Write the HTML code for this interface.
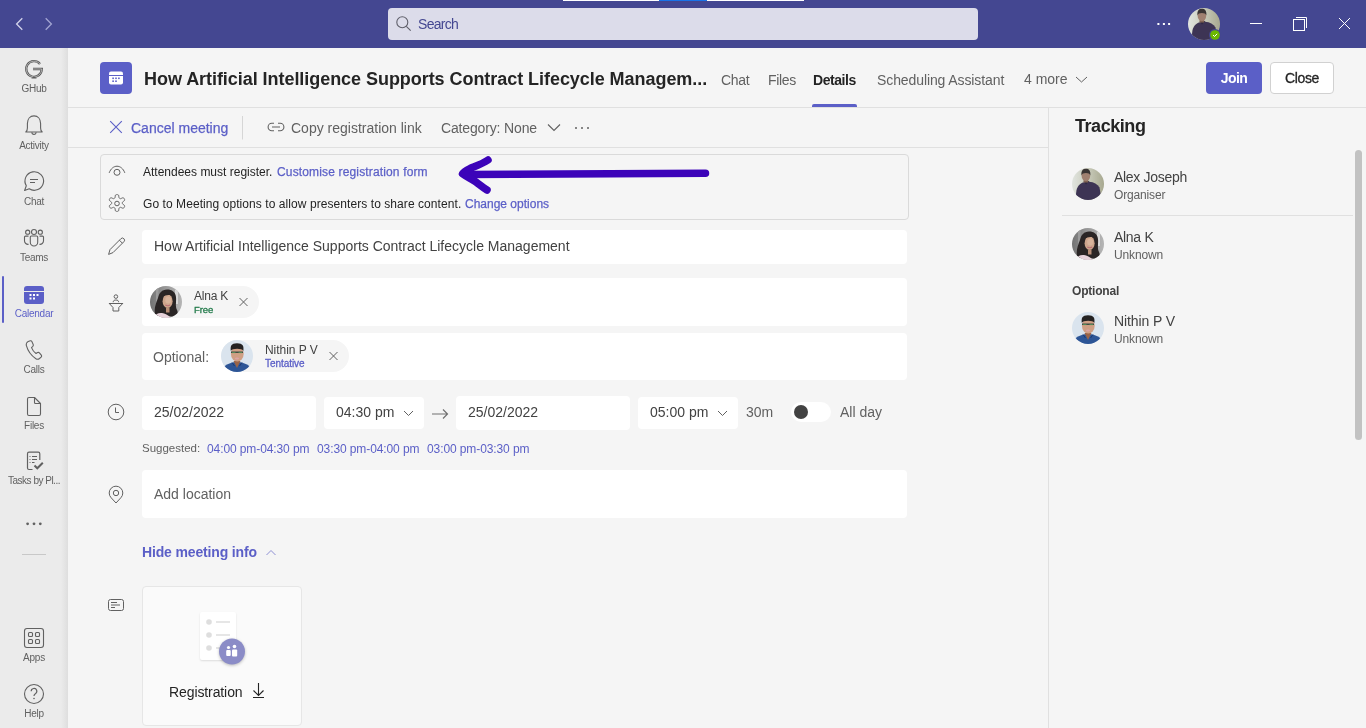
<!DOCTYPE html>
<html><head><meta charset="utf-8">
<style>
*{box-sizing:border-box;margin:0;padding:0}
html,body{-webkit-font-smoothing:antialiased;width:1366px;height:728px;overflow:hidden;background:#f5f5f5;font-family:"Liberation Sans",sans-serif;color:#242424}
.a{position:absolute}
.av{filter:blur(0.45px)}
.t{position:absolute;white-space:nowrap;line-height:1;will-change:transform}
svg{position:absolute;overflow:visible}
#tb{left:0;top:0;width:1366px;height:48px;background:#444791}
#rail{left:0;top:48px;width:68px;height:680px;background:linear-gradient(to right,#ebebeb 0,#ebebeb 61px,#dedede 68px)}
.rl{position:absolute;left:0;width:68px;text-align:center;font-size:10px;color:#616161;line-height:1;will-change:transform;letter-spacing:-0.25px}
</style></head><body>
<svg width="0" height="0" style="position:absolute">
<defs>
 <clipPath id="cc"><circle cx="16" cy="16" r="16"/></clipPath>
 <linearGradient id="gAlex" x1="0" x2="1" y1="0" y2="0"><stop offset="0" stop-color="#e4e8e4"/><stop offset="0.5" stop-color="#c9cbbb"/><stop offset="1" stop-color="#a3a48a"/></linearGradient>
 <linearGradient id="gAlna" x1="0" x2="1" y1="0" y2="0"><stop offset="0" stop-color="#6e6e6e"/><stop offset="0.5" stop-color="#9a9a9a"/><stop offset="1" stop-color="#b8b8b8"/></linearGradient>
 <filter id="bl" x="-10%" y="-10%" width="120%" height="120%"><feGaussianBlur stdDeviation="0.7"/></filter>
 <g id="avAlex" clip-path="url(#cc)"><g>
  <rect x="-2" y="-2" width="36" height="36" fill="url(#gAlex)"/>
  <path d="M3 34 L4.5 22 C6 17 9 14.8 12 14.2 L17 13.8 C22 14.2 25.5 16 27.5 19.5 L30 34 Z" fill="#3d3454"/>
  <path d="M11.5 13 L14 16.5 L17.5 13 Z" fill="#2e2840"/>
  <rect x="11.6" y="10.5" width="4.6" height="4" fill="#806252"/>
  <ellipse cx="13.9" cy="7.8" rx="4.3" ry="5.3" fill="#a08070"/>
  <path d="M9.4 7.5 C9 2.5 11 0.8 13.9 0.8 C16.8 0.8 18.8 2.5 18.4 7.5 C17.8 4.2 10 4.2 9.4 7.5 Z" fill="#3a3433"/>
 </g></g>
 <g id="avAlna" clip-path="url(#cc)"><g>
  <rect x="-2" y="-2" width="36" height="36" fill="url(#gAlna)"/>
  <rect x="6" y="0" width="2.5" height="22" fill="#9c9c9c"/>
  <rect x="25" y="4" width="3" height="14" fill="#d8d8d8"/>
  <path d="M5 28 C4 22 6 17 8 12 C9 7 12 3.5 17 3.5 C22 3.5 25.5 6 26 11 C26.5 16 25 20 27 24 C28.5 27 27.5 30 25 31 L18 30 L8 30 C6.5 30 5.5 29 5 28 Z" fill="#2a2525"/>
  <path d="M2 34 C4 28.5 8 26.5 12 27 C15 27.5 17 28.5 19.5 30.5 L21 34 Z" fill="#e8d3db"/>
  <ellipse cx="17.6" cy="15.2" rx="5" ry="6.9" fill="#cda58c"/>
  <ellipse cx="18.2" cy="14" rx="3" ry="3.5" fill="#d8b49c"/>
  <path d="M12.6 11 C14 6.8 19.5 6.5 22.6 10 C20 8.3 15 8.6 12.6 11 Z" fill="#2a2525"/>
  <path d="M16 21.5 L19.5 21.5 L19.5 26.5 L16 26.5 Z" fill="#b88e76"/>
  <path d="M15.3 19 Q17.8 20.4 20.2 19" stroke="#b86e76" stroke-width="1.1" fill="none"/>
 </g></g>
 <g id="avNith" clip-path="url(#cc)"><g>
  <rect x="-2" y="-2" width="36" height="36" fill="#dae4ee"/>
  <path d="M1 34 L3 26.5 C7 23.5 11 22 16 22 C21 22 25 23.5 29 26.5 L31 34 Z" fill="#2d5596"/>
  <path d="M12.5 21 L16 28 L19.5 21 Z" fill="#9a6448"/>
  <path d="M11 22.5 L13.5 26 M21 22.5 L18.5 26" stroke="#1e3a70" stroke-width="1"/>
  <ellipse cx="16.3" cy="13.8" rx="6.4" ry="7.6" fill="#cf9f84"/>
  <path d="M9.8 11 C9.3 6 10 3.5 16 3.3 C22 3.5 23 6 22.4 11 C21.5 8 10.7 8 9.8 11 Z" fill="#242222"/>
  <path d="M10 12.3 H22" stroke="#3f4c44" stroke-width="1.5"/>
  <path d="M11 12.6 H14.5 M17.5 12.6 H21" stroke="#5aa060" stroke-width="0.8"/>
  <ellipse cx="16" cy="18.5" rx="2.2" ry="1" fill="#dca4a4"/>
 </g></g>
</defs></svg>
<!-- title bar -->
<div id="tb" class="a"></div>
<div class="a" style="left:563px;top:0;width:241px;height:1px;background:#fff"></div>
<div class="a" style="left:659px;top:0;width:48px;height:1px;background:#1a73e8"></div>
<svg style="left:0;top:0" width="1366" height="48">
 <path d="M22.3 18.3 L16.6 24 L22.3 29.7" fill="none" stroke="#d2d3ea" stroke-width="1.3"/>
 <path d="M45.7 18.3 L51.4 24 L45.7 29.7" fill="none" stroke="#a3a5d2" stroke-width="1.3"/>
</svg>
<div class="a" style="left:388px;top:8px;width:590px;height:32px;background:#dcdcea;border-radius:4px"></div>
<svg style="left:388px;top:8px" width="40" height="32">
 <circle cx="14.3" cy="14.3" r="5.5" fill="none" stroke="#5f5f6a" stroke-width="1.1"/>
 <path d="M18.3 18.3 L22.7 22.7" stroke="#5f5f6a" stroke-width="1.1"/>
</svg>
<div class="t" style="left:418px;top:17px;font-size:14px;color:#444791;letter-spacing:-0.7px">Search</div>
<svg style="left:1150px;top:0" width="216" height="48">
 <rect x="7.4" y="23" width="2" height="2" fill="#fff"/><rect x="12.9" y="23" width="2" height="2" fill="#fff"/><rect x="18.1" y="23" width="2" height="2" fill="#fff"/>
 <path d="M100 23.5 H112" stroke="#fff" stroke-width="1"/>
 <rect x="143.5" y="19.5" width="11" height="11" fill="none" stroke="#fff" stroke-width="1"/>
 <path d="M146 17.5 H156.5 V28" fill="none" stroke="#fff" stroke-width="1"/>
 <path d="M189 18 L200 29 M200 18 L189 29" stroke="#fff" stroke-width="1"/>
</svg>
<!-- rail -->
<div id="rail" class="a"></div>
<svg style="left:0;top:48px" width="68" height="680" fill="none" stroke="#616161" stroke-width="1.1">
 <!-- GHub G -->
 <path d="M39.98 16 A7.8 7.8 0 1 0 41.8 21 H33" stroke-width="2.3" stroke="#5a5a5a"/>
 <path d="M39.98 16 A7.8 7.8 0 1 0 41.8 21 H33" stroke-width="0.6" stroke="#ebebeb"/>
 <path d="M31.2 30.5 L34 28.3 L36.8 30.5 Z" fill="#5a5a5a" stroke="none"/>
 <!-- bell -->
 <path d="M25.8 84 C26.8 83.2 27.4 82 27.4 80 V75.5 C27.4 71 30 67.9 34 67.9 C38 67.9 40.6 71 40.6 75.5 V80 C40.6 82 41.2 83.2 42.2 84 Z" stroke-linejoin="round"/>
 <path d="M31.9 84.3 A2.1 2.1 0 0 0 36.1 84.3"/>
 <!-- chat -->
 <path d="M24.6 142.5 L26.3 137.8 A9.3 9.3 0 1 1 29.2 140.8 Z" stroke-linejoin="round"/>
 <path d="M30 131.5 H38 M30 134.5 H35" stroke-width="1.2"/>
 <!-- teams -->
 <circle cx="27.7" cy="184.2" r="2.1"/><circle cx="34" cy="184" r="2.5"/><circle cx="40.3" cy="184.2" r="2.1"/>
 <path d="M30.3 189 A1 1 0 0 1 31.3 188 H36.7 A1 1 0 0 1 37.7 189 V194.3 A3.7 3.7 0 0 1 30.3 194.3 Z"/>
 <path d="M28.5 188.1 H25.5 A1 1 0 0 0 24.5 189.1 V192.8 A3.5 3.5 0 0 0 28.6 196.3"/>
 <path d="M39.5 188.1 H42.5 A1 1 0 0 1 43.5 189.1 V192.8 A3.5 3.5 0 0 1 39.4 196.3"/>
 <!-- calls -->
 <path d="M28.2 293.5 L30.3 292.8 C31 292.6 31.6 293 31.9 293.6 L33.2 296.5 C33.5 297.2 33.3 297.9 32.8 298.4 L31.5 299.6 C32.3 301.6 34 304 36 305.5 L37.6 304.6 C38.2 304.3 38.9 304.4 39.4 304.9 L41.3 307.2 C41.8 307.8 41.7 308.6 41.1 309.1 L39.5 310.5 C38.5 311.3 37 311.4 35.9 310.7 C31.5 307.7 27.9 303 26.3 297.3 C26 296 26.7 294 28.2 293.5 Z" stroke-linejoin="round"/>
 <!-- files -->
 <path d="M29.5 349.5 H34.5 L40.5 355.5 V366 A1.5 1.5 0 0 1 39 367.5 H29 A1.5 1.5 0 0 1 27.5 366 V351 A1.5 1.5 0 0 1 29 349.5 Z" stroke-linejoin="round"/>
 <path d="M34.5 349.8 V354.5 A1 1 0 0 0 35.5 355.5 H40.2"/>
 <!-- tasks -->
 <path d="M39.8 412 V405.7 A1.5 1.5 0 0 0 38.3 404.2 H29 A1.5 1.5 0 0 0 27.5 405.7 V420 A1.5 1.5 0 0 0 29 421.5 H32.5" stroke-linejoin="round" stroke-width="1.2"/>
 <path d="M32 408.5 H37 M32 411.5 H37 M32 414.5 H34.5" stroke-width="1.1"/>
 <circle cx="30" cy="408.5" r="0.6" fill="#616161" stroke="none"/><circle cx="30" cy="411.5" r="0.6" fill="#616161" stroke="none"/><circle cx="30" cy="414.5" r="0.6" fill="#616161" stroke="none"/>
 <path d="M34.5 417.5 L37.3 420.3 L42.8 414.8" stroke-width="2"/>
 <!-- more -->
 <circle cx="27.6" cy="475.8" r="1.4" fill="#616161" stroke="none"/><circle cx="34" cy="475.8" r="1.4" fill="#616161" stroke="none"/><circle cx="40.3" cy="475.8" r="1.4" fill="#616161" stroke="none"/>
 <path d="M22 506.5 H46" stroke="#c8c8c8" stroke-width="1"/>
 <!-- apps -->
 <rect x="24.5" y="580.5" width="19" height="19" rx="2.5"/>
 <rect x="28.5" y="584.5" width="4" height="4" rx="1"/><rect x="35.5" y="584.5" width="4" height="4" rx="1"/>
 <rect x="28.5" y="591.5" width="4" height="4" rx="1"/><rect x="35.5" y="591.5" width="4" height="4" rx="1"/>
 <!-- help -->
 <circle cx="34" cy="646" r="9.5"/>
 <path d="M31.2 643.3 A2.8 2.8 0 1 1 35.4 645.7 C34.5 646.3 34 646.8 34 648" stroke-width="1.2"/>
 <circle cx="34" cy="650.5" r="0.8" fill="#616161" stroke="none"/>
</svg>
<!-- calendar active -->
<div class="a" style="left:2px;top:276px;width:2px;height:47px;background:#5b5fc7;border-radius:1px"></div>
<svg style="left:0;top:48px" width="68" height="680">
 <path d="M24 241 A3 3 0 0 1 27 238 H41 A3 3 0 0 1 44 241 V243 H24 Z" fill="#5b5fc7"/>
 <path d="M24 244 H44 V253 A3 3 0 0 1 41 256 H27 A3 3 0 0 1 24 253 Z" fill="#5b5fc7"/>
 <g fill="#fff"><rect x="29.5" y="246" width="2" height="2"/><rect x="33" y="246" width="2" height="2"/><rect x="36.5" y="246" width="2" height="2"/><rect x="29.5" y="249.5" width="2" height="2"/><rect x="33" y="249.5" width="2" height="2"/></g>
</svg>
<div class="rl" style="top:83.5px">GHub</div>
<div class="rl" style="top:140.5px">Activity</div>
<div class="rl" style="top:196.5px">Chat</div>
<div class="rl" style="top:252.5px">Teams</div>
<div class="rl" style="top:309px;color:#5b5fc7">Calendar</div>
<div class="rl" style="top:364.5px">Calls</div>
<div class="rl" style="top:420.5px">Files</div>
<div class="rl" style="top:476px;letter-spacing:-0.5px">Tasks by Pl...</div>
<div class="rl" style="top:652.5px">Apps</div>
<div class="rl" style="top:708.5px">Help</div>
<!-- header -->
<div class="a" style="left:68px;top:107px;width:1298px;height:1px;background:#e0e0e0"></div>
<div class="a" style="left:100px;top:62px;width:32px;height:32px;background:#5b5fc7;border-radius:4px"></div>
<svg style="left:100px;top:62px" width="32" height="32">
 <path d="M9 11.5 A2 2 0 0 1 11 9.5 H21 A2 2 0 0 1 23 11.5 V13 H9 Z" fill="#fff"/>
 <path d="M9 14 H23 V20.5 A2 2 0 0 1 21 22.5 H11 A2 2 0 0 1 9 20.5 Z" fill="#fff"/>
 <g fill="#5b5fc7"><rect x="12.3" y="15.5" width="1.6" height="1.6"/><rect x="15.2" y="15.5" width="1.6" height="1.6"/><rect x="18.1" y="15.5" width="1.6" height="1.6"/><rect x="12.3" y="18.4" width="1.6" height="1.6"/><rect x="15.2" y="18.4" width="1.6" height="1.6"/></g>
</svg>
<div class="t" style="left:144px;top:70px;font-size:18px;font-weight:bold;color:#242424;letter-spacing:-0.05px">How Artificial Intelligence Supports Contract Lifecycle Managem...</div>
<div class="t" style="left:721px;top:73px;font-size:14px;color:#616161;letter-spacing:-0.35px">Chat</div>
<div class="t" style="left:768px;top:73px;font-size:14px;color:#616161;letter-spacing:-0.3px">Files</div>
<div class="t" style="left:813px;top:73px;font-size:14px;color:#242424;font-weight:bold;letter-spacing:-0.45px">Details</div>
<div class="a" style="left:812px;top:104px;width:45px;height:3px;background:#5b5fc7;border-radius:2px 2px 0 0"></div>
<div class="t" style="left:877px;top:73px;font-size:14px;color:#616161;letter-spacing:-0.1px">Scheduling Assistant</div>
<div class="t" style="left:1024px;top:72px;font-size:14px;color:#616161">4 more</div>
<svg style="left:1074px;top:72px" width="16" height="16"><path d="M2 5 L7.5 10 L13 5" fill="none" stroke="#616161" stroke-width="1"/></svg>
<div class="a" style="left:1206px;top:62px;width:56px;height:32px;background:#5b5fc7;border-radius:4px"></div>
<div class="t" style="left:1206px;top:71px;width:56px;text-align:center;font-size:14px;font-weight:bold;color:#fff;letter-spacing:-0.6px">Join</div>
<div class="a" style="left:1270px;top:62px;width:64px;height:32px;background:#fff;border:1px solid #d1d1d1;border-radius:4px"></div>
<div class="t" style="left:1270px;top:71px;width:64px;text-align:center;font-size:14px;color:#242424;letter-spacing:-0.4px;-webkit-text-stroke:0.3px #242424">Close</div>
<!-- right divider -->
<div class="a" style="left:1048px;top:108px;width:1px;height:620px;background:#e0e0e0"></div>
<!-- toolbar -->
<div class="a" style="left:68px;top:147px;width:980px;height:1px;background:#e0e0e0"></div>
<svg style="left:100px;top:112px" width="520" height="32" fill="none">
 <path d="M10.2 9.2 L21.8 20.8 M21.8 9.2 L10.2 20.8" stroke="#5b5fc7" stroke-width="1.1"/>
 <path d="M142.5 4 V27.5" stroke="#d6d6d6" stroke-width="1"/>
 <path d="M174 11.3 H171.8 A3.7 3.7 0 0 0 171.8 18.7 H174 M178 11.3 H180.2 A3.7 3.7 0 0 1 180.2 18.7 H178 M172 15 H180" stroke="#616161" stroke-width="1.1"/>
 <path d="M448 12.5 L454 18.5 L460 12.5" stroke="#616161" stroke-width="1.1"/>
 <circle cx="476" cy="16" r="1" fill="#616161"/><circle cx="482" cy="16" r="1" fill="#616161"/><circle cx="488" cy="16" r="1" fill="#616161"/>
</svg>
<div class="t" style="left:131px;top:121px;font-size:14px;color:#5b5fc7;-webkit-text-stroke:0.25px #5b5fc7">Cancel meeting</div>
<div class="t" style="left:291px;top:121px;font-size:14px;color:#616161">Copy registration link</div>
<div class="t" style="left:441px;top:121px;font-size:14px;color:#616161;letter-spacing:-0.15px">Category: None</div>
<!-- banner -->
<div class="a" style="left:100px;top:154px;width:809px;height:66px;border:1px solid #dadada;border-radius:4px"></div>
<svg style="left:100px;top:154px" width="40" height="66" fill="none" stroke="#616161" stroke-width="1">
 <path d="M9.3 18.5 C12.5 10 21.5 10 24.7 18.5" stroke-linecap="round"/>
 <circle cx="17" cy="18.3" r="3"/>
 <g transform="translate(17,49.5)">
 <path d="M0.00 -8.40 L0.29 -8.39 L0.58 -8.36 L0.87 -8.31 L1.15 -8.20 L1.41 -8.01 L1.62 -7.64 L1.75 -7.03 L1.81 -6.30 L1.85 -5.70 L1.94 -5.33 L2.07 -5.11 L2.22 -4.98 L2.37 -4.87 L2.54 -4.77 L2.70 -4.68 L2.86 -4.58 L3.03 -4.49 L3.20 -4.41 L3.40 -4.35 L3.64 -4.34 L4.01 -4.45 L4.55 -4.71 L5.21 -5.03 L5.80 -5.23 L6.23 -5.23 L6.53 -5.10 L6.76 -4.91 L6.95 -4.69 L7.12 -4.45 L7.27 -4.20 L7.41 -3.94 L7.53 -3.67 L7.63 -3.40 L7.68 -3.10 L7.64 -2.78 L7.43 -2.41 L6.97 -2.00 L6.36 -1.59 L5.86 -1.25 L5.58 -0.98 L5.46 -0.77 L5.42 -0.57 L5.40 -0.38 L5.40 -0.19 L5.40 0.00 L5.40 0.19 L5.40 0.38 L5.42 0.57 L5.46 0.77 L5.58 0.98 L5.86 1.25 L6.36 1.59 L6.97 2.00 L7.43 2.41 L7.64 2.78 L7.68 3.10 L7.63 3.40 L7.53 3.67 L7.41 3.94 L7.27 4.20 L7.12 4.45 L6.95 4.69 L6.76 4.91 L6.53 5.10 L6.23 5.23 L5.80 5.23 L5.21 5.03 L4.55 4.71 L4.01 4.45 L3.64 4.34 L3.40 4.35 L3.20 4.41 L3.03 4.49 L2.86 4.58 L2.70 4.68 L2.54 4.77 L2.37 4.87 L2.22 4.98 L2.07 5.11 L1.94 5.33 L1.85 5.70 L1.81 6.30 L1.75 7.03 L1.62 7.64 L1.41 8.01 L1.15 8.20 L0.87 8.31 L0.58 8.36 L0.29 8.39 L0.00 8.40 L-0.29 8.39 L-0.58 8.36 L-0.87 8.31 L-1.15 8.20 L-1.41 8.01 L-1.62 7.64 L-1.75 7.03 L-1.81 6.30 L-1.85 5.70 L-1.94 5.33 L-2.07 5.11 L-2.22 4.98 L-2.37 4.87 L-2.54 4.77 L-2.70 4.68 L-2.86 4.58 L-3.03 4.49 L-3.20 4.41 L-3.40 4.35 L-3.64 4.34 L-4.01 4.45 L-4.55 4.71 L-5.21 5.03 L-5.80 5.23 L-6.23 5.23 L-6.53 5.10 L-6.76 4.91 L-6.95 4.69 L-7.12 4.45 L-7.27 4.20 L-7.41 3.94 L-7.53 3.67 L-7.63 3.40 L-7.68 3.10 L-7.64 2.78 L-7.43 2.41 L-6.97 2.00 L-6.36 1.59 L-5.86 1.25 L-5.58 0.98 L-5.46 0.77 L-5.42 0.57 L-5.40 0.38 L-5.40 0.19 L-5.40 0.00 L-5.40 -0.19 L-5.40 -0.38 L-5.42 -0.57 L-5.46 -0.77 L-5.58 -0.98 L-5.86 -1.25 L-6.36 -1.59 L-6.97 -2.00 L-7.43 -2.41 L-7.64 -2.78 L-7.68 -3.10 L-7.63 -3.40 L-7.53 -3.67 L-7.41 -3.94 L-7.27 -4.20 L-7.12 -4.45 L-6.95 -4.69 L-6.76 -4.91 L-6.53 -5.10 L-6.23 -5.23 L-5.80 -5.23 L-5.21 -5.03 L-4.55 -4.71 L-4.01 -4.45 L-3.64 -4.34 L-3.40 -4.35 L-3.20 -4.41 L-3.03 -4.49 L-2.86 -4.58 L-2.70 -4.68 L-2.54 -4.77 L-2.37 -4.87 L-2.22 -4.98 L-2.07 -5.11 L-1.94 -5.33 L-1.85 -5.70 L-1.81 -6.30 L-1.75 -7.03 L-1.62 -7.64 L-1.41 -8.01 L-1.15 -8.20 L-0.87 -8.31 L-0.58 -8.36 L-0.29 -8.39 Z" stroke-linejoin="round" transform="translate(0,-0.5)"/>
 <circle cx="0" cy="0" r="2.3"/>
 </g>
</svg>
<div class="t" style="left:143px;top:166px;font-size:12px;color:#242424">Attendees must register.</div>
<div class="t" style="left:277px;top:166px;font-size:12px;color:#5b5fc7;letter-spacing:0.15px;-webkit-text-stroke:0.25px #5b5fc7">Customise registration form</div>
<div class="t" style="left:143px;top:198px;font-size:12px;color:#242424;letter-spacing:0.07px">Go to Meeting options to allow presenters to share content.</div>
<div class="t" style="left:465px;top:198px;font-size:12px;color:#5b5fc7;-webkit-text-stroke:0.25px #5b5fc7">Change options</div>
<svg style="left:440px;top:150px" width="290" height="50" fill="none">
 <path d="M265.5 23.3 C200 24 120 24.5 26 24.5" stroke="#3c03b9" stroke-width="7.5" stroke-linecap="round"/>
 <path d="M48 10 C42 14 36 16 30 18.5 C26 20.5 23.5 22 22.5 23.8 C27 27 32 29 36 32 C40 35 43 37.5 47 40" stroke="#3c03b9" stroke-width="7.5" stroke-linecap="round" stroke-linejoin="round"/>
</svg>
<!-- title field -->
<svg style="left:100px;top:230px" width="40" height="34" fill="none" stroke="#616161" stroke-width="1">
 <path d="M8.6 24.4 L10 19.6 L20.9 8.7 A2.1 2.1 0 0 1 23.9 11.7 L13 22.6 Z" stroke-linejoin="round"/>
 <path d="M19.4 10.2 L22.4 13.2"/>
</svg>
<div class="a" style="left:142px;top:230px;width:765px;height:34px;background:#fff;border-radius:4px"></div>
<div class="t" style="left:154px;top:239px;font-size:14px;color:#424242">How Artificial Intelligence Supports Contract Lifecycle Management</div>
<!-- attendees -->
<div class="a" style="left:142px;top:278px;width:765px;height:48px;background:#fff;border-radius:4px"></div>
<svg style="left:100px;top:286px" width="40" height="32" fill="none" stroke="#616161" stroke-width="1">
 <circle cx="15.9" cy="10.6" r="1.8"/>
 <path d="M13.2 16.2 C13.2 14.6 14.2 14 15.9 14 C17.6 14 18.6 14.6 18.6 16.2"/>
 <path d="M9 17.5 H23 M9.3 17.5 L13 21.5 V25 H18.8 V21.5 L22.7 17.5" stroke-linejoin="round"/>
</svg>
<div class="a" style="left:150px;top:286px;width:109px;height:32px;background:#f5f5f5;border-radius:16px"></div>
<svg class="av" style="left:150px;top:286px" width="32" height="32"><use href="#avAlna"/></svg>
<div class="t" style="left:194px;top:290px;font-size:12px;color:#424242;letter-spacing:-0.2px">Alna K</div>
<div class="t" style="left:194px;top:305px;font-size:9.5px;color:#237b4b;-webkit-text-stroke:0.3px #237b4b;letter-spacing:-0.05px">Free</div>
<svg style="left:236px;top:294px" width="16" height="16"><path d="M3.5 4 L11.5 12 M11.5 4 L3.5 12" stroke="#616161" stroke-width="1"/></svg>
<div class="a" style="left:142px;top:333px;width:765px;height:47px;background:#fff;border-radius:4px"></div>
<div class="t" style="left:153px;top:349.5px;font-size:14px;color:#616161">Optional:</div>
<div class="a" style="left:221px;top:340px;width:128px;height:32px;background:#f5f5f5;border-radius:16px"></div>
<svg class="av" style="left:221px;top:340px" width="32" height="32"><use href="#avNith"/></svg>
<div class="t" style="left:265px;top:344px;font-size:12px;color:#424242;letter-spacing:-0.05px">Nithin P V</div>
<div class="t" style="left:265px;top:359px;font-size:10px;color:#5b5fc7;-webkit-text-stroke:0.3px #5b5fc7;letter-spacing:-0.05px">Tentative</div>
<svg style="left:326px;top:348px" width="16" height="16"><path d="M3.5 4 L11.5 12 M11.5 4 L3.5 12" stroke="#616161" stroke-width="1"/></svg>
<!-- dates -->
<svg style="left:100px;top:396px" width="40" height="34" fill="none" stroke="#616161" stroke-width="1">
 <circle cx="16" cy="16" r="7.8"/>
 <path d="M15.5 11.5 V16.5 H19"/>
</svg>
<div class="a" style="left:142px;top:396px;width:174px;height:34px;background:#fff;border-radius:4px"></div>
<div class="t" style="left:154px;top:405px;font-size:14px;color:#424242">25/02/2022</div>
<div class="a" style="left:324px;top:397px;width:100px;height:32px;background:#fff;border-radius:4px"></div>
<div class="t" style="left:336px;top:405px;font-size:14px;color:#424242">04:30 pm</div>
<svg style="left:400px;top:405px" width="16" height="16"><path d="M4 6 L8.5 10.5 L13 6" fill="none" stroke="#616161" stroke-width="1"/></svg>
<svg style="left:428px;top:405px" width="24" height="16" fill="none" stroke="#707070" stroke-width="1.2"><path d="M4 9 H19.5 M15 4.5 L19.5 9 L15 13.5"/></svg>
<div class="a" style="left:456px;top:396px;width:174px;height:34px;background:#fff;border-radius:4px"></div>
<div class="t" style="left:468px;top:405px;font-size:14px;color:#424242">25/02/2022</div>
<div class="a" style="left:638px;top:397px;width:100px;height:32px;background:#fff;border-radius:4px"></div>
<div class="t" style="left:650px;top:405px;font-size:14px;color:#424242">05:00 pm</div>
<svg style="left:714px;top:405px" width="16" height="16"><path d="M4 6 L8.5 10.5 L13 6" fill="none" stroke="#616161" stroke-width="1"/></svg>
<div class="t" style="left:746px;top:405px;font-size:14px;color:#616161">30m</div>
<div class="a" style="left:791px;top:402px;width:40px;height:20px;background:#fff;border-radius:10px"></div>
<div class="a" style="left:794px;top:405px;width:14px;height:14px;background:#424242;border-radius:7px"></div>
<div class="t" style="left:840px;top:405px;font-size:14px;color:#616161">All day</div>
<div class="t" style="left:142px;top:443px;font-size:11.5px;color:#616161">Suggested:</div>
<div class="t" style="left:207px;top:443px;font-size:12px;color:#5b5fc7;letter-spacing:-0.1px">04:00 pm-04:30 pm</div>
<div class="t" style="left:317px;top:443px;font-size:12px;color:#5b5fc7;letter-spacing:-0.1px">03:30 pm-04:00 pm</div>
<div class="t" style="left:427px;top:443px;font-size:12px;color:#5b5fc7;letter-spacing:-0.1px">03:00 pm-03:30 pm</div>
<!-- location -->
<svg style="left:100px;top:479px" width="40" height="32" fill="none" stroke="#616161" stroke-width="1">
 <path d="M16 24 L11.2 18.8 A6.8 6.8 0 1 1 20.8 18.8 Z" stroke-linejoin="round"/>
 <circle cx="16" cy="14" r="2.7"/>
</svg>
<div class="a" style="left:142px;top:470px;width:765px;height:48px;background:#fff;border-radius:4px"></div>
<div class="t" style="left:154px;top:487px;font-size:14px;color:#616161">Add location</div>
<div class="t" style="left:142px;top:544.5px;font-size:14px;font-weight:bold;color:#5b5fc7;letter-spacing:-0.15px">Hide meeting info</div>
<svg style="left:263px;top:544px" width="16" height="16"><path d="M3.5 11 L8 6.5 L12.5 11" fill="none" stroke="#8e90d4" stroke-width="1"/></svg>
<!-- notes -->
<svg style="left:100px;top:589px" width="40" height="32" fill="none" stroke="#616161" stroke-width="1">
 <rect x="8.5" y="10.5" width="15" height="11" rx="2"/>
 <path d="M11 13.5 H17 M11 16 H20 M11 18.5 H15" />
</svg>
<div class="a" style="left:142px;top:586px;width:160px;height:140px;background:#fafafa;border:1px solid #e6e6e6;border-radius:4px"></div>
<div class="a" style="left:200px;top:612px;width:36px;height:48px;background:#fff;border-radius:2px;box-shadow:0 1px 2px rgba(0,0,0,0.12)"></div>
<svg style="left:190px;top:605px" width="70" height="70">
 <circle cx="19" cy="17" r="2.8" fill="#dedede"/><path d="M26 17 H40" stroke="#dedede" stroke-width="1.5"/>
 <circle cx="19" cy="30" r="2.8" fill="#dedede"/><path d="M26 30 H40" stroke="#dedede" stroke-width="1.5"/>
 <circle cx="19" cy="43" r="2.8" fill="#dedede"/><path d="M26 43 H34" stroke="#dedede" stroke-width="1.5"/>
 <circle cx="42" cy="46.5" r="13" fill="#8b8cc7" style="filter:drop-shadow(0 1px 1.5px rgba(0,0,0,0.25))"/>
 <circle cx="38.5" cy="42.5" r="1.6" fill="#fff"/><circle cx="44.5" cy="41.5" r="1.8" fill="#fff"/>
 <rect x="36.2" y="45" width="4.5" height="6" rx="1" fill="#fff"/><rect x="42" y="44.5" width="5.2" height="7" rx="1" fill="#fff"/>
</svg>
<div class="t" style="left:169px;top:685px;font-size:14px;color:#242424;letter-spacing:-0.1px">Registration</div>
<svg style="left:250px;top:682px" width="18" height="18" fill="none" stroke="#242424" stroke-width="1.1"><path d="M8.5 1 V13 M3.5 8.5 L8.5 13.5 L13.5 8.5 M3 15.5 H14"/></svg>
<!-- right panel -->
<div class="t" style="left:1075px;top:116.5px;font-size:18px;font-weight:bold;color:#242424;letter-spacing:-0.45px">Tracking</div>
<div class="a" style="left:1355px;top:150px;width:7px;height:290px;background:#c2c2c2;border-radius:4px"></div>
<svg class="av" style="left:1072px;top:168px" width="32" height="32"><use href="#avAlex"/></svg>
<div class="t" style="left:1114px;top:170px;font-size:14px;color:#424242;letter-spacing:-0.3px">Alex Joseph</div>
<div class="t" style="left:1114px;top:189px;font-size:12px;color:#616161;letter-spacing:-0.15px">Organiser</div>
<div class="a" style="left:1062px;top:215px;width:291px;height:1px;background:#e0e0e0"></div>
<svg class="av" style="left:1072px;top:228px" width="32" height="32"><use href="#avAlna"/></svg>
<div class="t" style="left:1114px;top:230px;font-size:14px;color:#424242;letter-spacing:-0.3px">Alna K</div>
<div class="t" style="left:1114px;top:249px;font-size:12px;color:#616161;letter-spacing:-0.15px">Unknown</div>
<div class="t" style="left:1072px;top:285px;font-size:12px;font-weight:bold;color:#424242;letter-spacing:-0.2px">Optional</div>
<svg class="av" style="left:1072px;top:312px" width="32" height="32"><use href="#avNith"/></svg>
<div class="t" style="left:1114px;top:314px;font-size:14px;color:#424242;letter-spacing:-0.1px">Nithin P V</div>
<div class="t" style="left:1114px;top:333px;font-size:12px;color:#616161;letter-spacing:-0.15px">Unknown</div>
<!-- titlebar avatar -->
<svg class="av" style="left:1188px;top:8px" width="34" height="34"><use href="#avAlex"/>
 <circle cx="27" cy="27" r="6" fill="#444791"/><circle cx="27" cy="27" r="4.8" fill="#6bb700"/>
 <path d="M25 27 L26.5 28.5 L29.2 25.8" fill="none" stroke="#fff" stroke-width="1"/>
</svg>
</body></html>
